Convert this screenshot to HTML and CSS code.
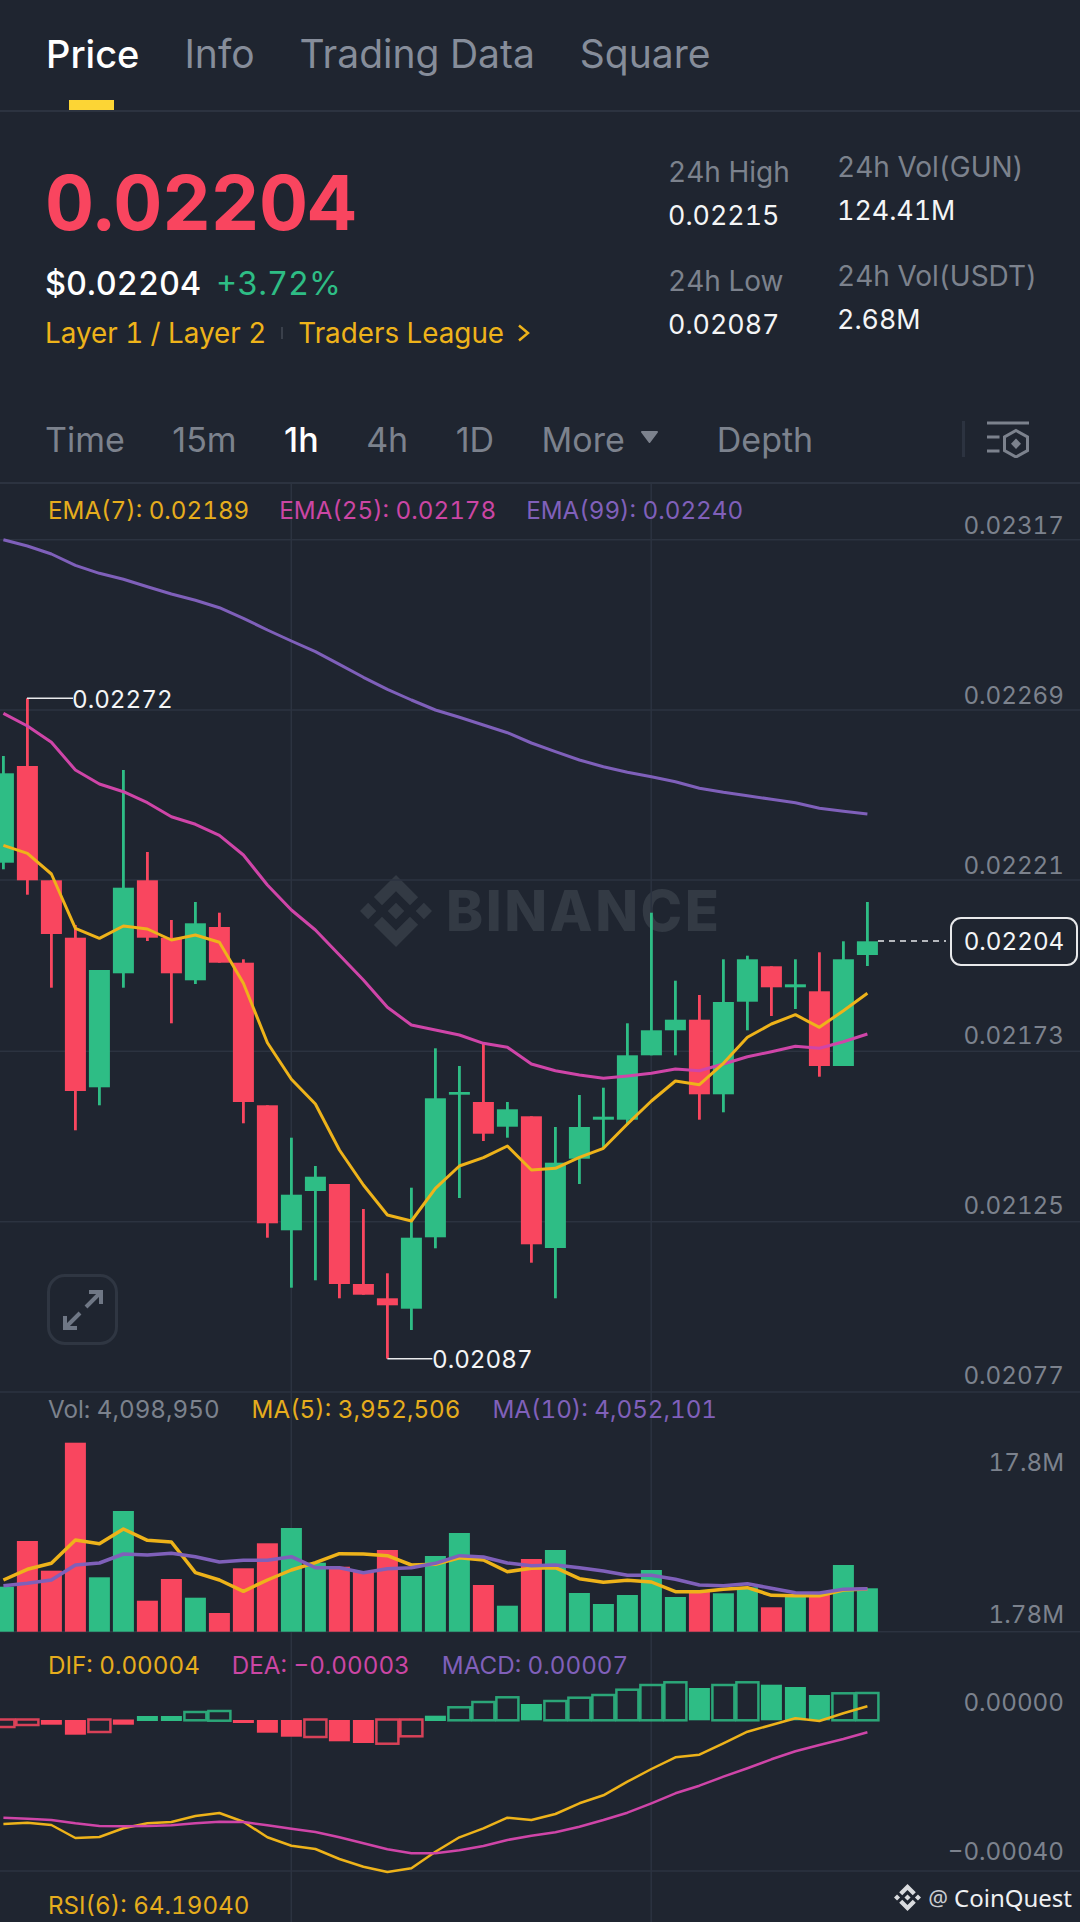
FILE: index.html
```html
<!DOCTYPE html>
<html lang="en">
<head>
    <meta charset="UTF-8">
    <meta name="viewport" content="width=device-width, initial-scale=1.0">
    <title>GUN/USDT Price</title>
    <link rel="stylesheet" href="styles.css">
</head>
<body>
    <div class="page">
        <nav class="tabs">
            <a class="tab active" href="#">Price</a>
            <a class="tab" href="#">Info</a>
            <a class="tab" href="#">Trading Data</a>
            <a class="tab" href="#">Square</a>
        </nav>

        <section class="summary">
            <div class="quote">
                <div class="last-price">0.02204</div>
                <div class="fiat-row">
                    <span class="fiat">$0.02204</span>
                    <span class="change">+3.72%</span>
                </div>
                <div class="tags">
                    <span>Layer 1 / Layer 2</span>
                    <i class="tag-sep"></i>
                    <span>Traders League</span>
                    <svg class="chevron" viewBox="0 0 13 18"><path d="M2 1.500 11 9 2 16.500" /></svg>
                </div>
            </div>
            <div class="stats">
                <div class="stat-col">
                    <div class="stat"><span class="stat-label">24h High</span><span class="stat-value">0.02215</span></div>
                    <div class="stat"><span class="stat-label">24h Low</span><span class="stat-value">0.02087</span></div>
                </div>
                <div class="stat-col stat-col-vol">
                    <div class="stat"><span class="stat-label">24h Vol(GUN)</span><span class="stat-value">124.41M</span></div>
                    <div class="stat"><span class="stat-label">24h Vol(USDT)</span><span class="stat-value">2.68M</span></div>
                </div>
            </div>
        </section>

        <div class="toolbar">
            <span class="interval">Time</span>
            <span class="interval">15m</span>
            <span class="interval active">1h</span>
            <span class="interval">4h</span>
            <span class="interval">1D</span>
            <span class="interval more">More
                <svg class="caret" viewBox="0 0 19 12"><path d="M2 1h15L9.500 11z" /></svg>
            </span>
            <span class="interval depth">Depth</span>
            <i class="toolbar-sep"></i>
            <svg class="settings" viewBox="0 0 44 38">
                <path class="settings-line" d="M1 3h42M1 17h12.500M1 31h12.500" />
                <path class="settings-line" d="M30 10.500 41.500 17v13.500L30 37l-11.500-6.500V17z" />
                <path class="settings-dot" d="M30 18.500 35 23.700 30 29 25 23.700z" />
            </svg>
        </div>

        <div class="chart">
            <div class="watermark">
                <svg class="watermark-logo" viewBox="0 0 126.610 126.610"><path d="m38.730 53.200 24.590-24.580 24.600 24.600 14.300-14.310L63.320 0 24.420 38.900zM0 63.31l14.300-14.310 14.310 14.310-14.310 14.300zM38.730 73.41 63.32 98l24.600-24.600 14.310 14.290-38.900 38.910-38.910-38.880zM98 63.31l14.300-14.310 14.310 14.300-14.310 14.310zM77.830 63.300 63.320 48.780 52.590 59.510l-1.240 1.230-2.540 2.540 14.510 14.500 14.510-14.470z" /></svg>
                <span>BINANCE</span>
            </div>

            <svg id="plot" class="plot" viewBox="0 484 1080 1438"></svg>

            <div class="pane pane-main">
                <div class="legend">
                    <span class="c-yellow">EMA(7): 0.02189</span>
                    <span class="c-pink">EMA(25): 0.02178</span>
                    <span class="c-purple">EMA(99): 0.02240</span>
                </div>
                <div class="y-axis">
                    <span>0.02317</span>
                    <span>0.02269</span>
                    <span>0.02221</span>
                    <span>0.02173</span>
                    <span>0.02125</span>
                    <span>0.02077</span>
                </div>
                <span class="mark mark-high">0.02272</span>
                <span class="mark mark-low">0.02087</span>
                <span class="price-tag">0.02204</span>
                <button class="expand">
                    <svg viewBox="0 0 42 42"><path d="M24 18 39 3M27 3h12v12M18 24 3 39M3 27v12h12" /></svg>
                </button>
            </div>

            <div class="pane pane-vol">
                <div class="legend">
                    <span class="c-gray">Vol: 4,098,950</span>
                    <span class="c-yellow">MA(5): 3,952,506</span>
                    <span class="c-purple">MA(10): 4,052,101</span>
                </div>
                <div class="y-axis">
                    <span>17.8M</span>
                    <span>1.78M</span>
                </div>
            </div>

            <div class="pane pane-macd">
                <div class="legend">
                    <span class="c-yellow">DIF: 0.00004</span>
                    <span class="c-pink">DEA: −0.00003</span>
                    <span class="c-purple">MACD: 0.00007</span>
                </div>
                <div class="y-axis">
                    <span>0.00000</span>
                    <span>−0.00040</span>
                </div>
            </div>

            <div class="pane pane-rsi">
                <div class="legend">
                    <span class="c-yellow">RSI(6): 64.19040</span>
                </div>
                <div class="credit">
                    <svg class="credit-logo" viewBox="0 0 126.610 126.610"><path d="m38.730 53.200 24.590-24.580 24.600 24.600 14.300-14.310L63.320 0 24.420 38.900zM0 63.31l14.300-14.310 14.310 14.310-14.310 14.300zM38.730 73.41 63.32 98l24.600-24.600 14.310 14.290-38.900 38.910-38.910-38.880zM98 63.31l14.300-14.310 14.310 14.300-14.310 14.310zM77.830 63.300 63.320 48.780 52.590 59.510l-1.240 1.230-2.540 2.540 14.510 14.500 14.510-14.470z" /></svg>
                    <span class="credit-at">@</span>
                    <span>CoinQuest</span>
                </div>
            </div>
        </div>
    </div>

    <script src="chart.js"></script>
</body>
</html>
```

FILE: styles.css
```css
* {
    box-sizing: border-box;
}

body {
    margin: 0;
    background: #1f2530;
    font-family: 'Inter', sans-serif;
    font-variant-numeric: tabular-nums;
    color: #fff;
}

.page {
    width: 1080px;
    height: 1922px;
    overflow: hidden;
}

/* tabs */
.tabs {
    display: flex;
    gap: 45px;
    height: 112px;
    padding: 29px 0 0 46px;
    border-bottom: 2px solid #2c3340;
}

.tab {
    position: relative;
    height: 81px;
    font-size: 39px;
    line-height: 50px;
    color: #868d9a;
    text-decoration: none;
}

.tab.active {
    font-size: 38px;
    color: #fff;
    font-weight: 500;
}

.tab.active::after {
    content: "";
    position: absolute;
    left: 23px;
    bottom: 0;
    width: 45px;
    height: 10px;
    background: #fcd535;
}

/* price summary */
.summary {
    display: flex;
    justify-content: space-between;
    height: 268px;
    padding: 37px 0 0 45px;
}

.last-price {
    margin-top: 5px;
    font-size: 76px;
    line-height: 96px;
    font-weight: 700;
    letter-spacing: -0.600px;
    color: #f9455f;
}

.fiat-row {
    display: flex;
    gap: 15px;
    margin-top: 14px;
    font-size: 32.500px;
    line-height: 40px;
}

.fiat {
    font-weight: 500;
}

.change {
    color: #2ebd85;
}

.tags {
    display: flex;
    align-items: center;
    margin-top: 9px;
    font-size: 27.800px;
    line-height: 40px;
    color: #eeb31a;
}

.tag-sep {
    width: 2px;
    height: 12px;
    margin: 0 15px;
    background: #3a404b;
}

.chevron {
    width: 13px;
    height: 18px;
    margin-left: 13px;
    fill: none;
    stroke: #eeb31a;
    stroke-width: 2.500;
}

.stats {
    display: flex;
    width: 412px;
}

.stat-col {
    display: flex;
    flex-direction: column;
    gap: 30px;
    width: 169px;
    padding-top: 5px;
}

.stat-col-vol {
    width: auto;
    padding-top: 0;
}

.stat {
    display: flex;
    flex-direction: column;
    gap: 7px;
}

.stat-label {
    font-size: 28px;
    line-height: 36px;
    color: #7c828d;
}

.stat-value {
    font-size: 26.800px;
    line-height: 36px;
    color: #f4f5f6;
}

/* interval bar */
.toolbar {
    display: flex;
    align-items: center;
    height: 104px;
    padding: 16px 50px 0 45px;
    border-bottom: 2px solid #2c3340;
    font-size: 34px;
    font-variant-numeric: normal;
    color: #7c828d;
}

.interval {
    margin-right: 47.500px;
}

.interval.active {
    color: #fff;
    font-weight: 500;
}

.more {
    display: flex;
    align-items: center;
    gap: 15px;
    margin-right: 58px;
}

.caret {
    width: 19px;
    height: 12px;
    margin-top: -4px;
    fill: #7c828d;
    stroke: #7c828d;
    stroke-width: 2;
    stroke-linejoin: round;
}

.depth {
    margin-right: auto;
}

.toolbar-sep {
    width: 3px;
    height: 36px;
    margin-right: 21px;
    background: #2c3340;
}

.settings {
    width: 44px;
    height: 38px;
}

.settings-line {
    fill: none;
    stroke: #7c828d;
    stroke-width: 3;
}

.settings-dot {
    fill: #7c828d;
}

/* chart */
.chart {
    position: relative;
    height: 1438px;
}

.plot {
    position: absolute;
    top: 0;
    left: 0;
    width: 1080px;
    height: 1438px;
}

.watermark {
    position: absolute;
    top: 391px;
    left: 360px;
    display: flex;
    align-items: center;
    gap: 14px;
    font-size: 56px;
    line-height: 72px;
    font-weight: 800;
    letter-spacing: 2.500px;
    color: #333a44;
}

.watermark-logo {
    width: 72px;
    height: 72px;
    fill: #333a44;
}

.pane {
    position: relative;
}

.pane-main {
    height: 908px;
}

.pane-vol {
    height: 240px;
}

.pane-macd {
    height: 240px;
}

.pane-rsi {
    height: 50px;
}

.legend {
    display: flex;
    gap: 30px;
    padding-left: 48px;
    font-size: 24.200px;
    line-height: 30px;
}

.pane-main .legend {
    padding-top: 12px;
}

.pane-vol .legend {
    gap: 32px;
    padding-top: 3px;
}

.pane-macd .legend {
    gap: 32px;
    padding-top: 19px;
}

.pane-rsi .legend {
    padding-top: 19px;
}

.c-yellow {
    color: #e6ad1d;
}

.c-pink {
    color: #cb46a4;
}

.c-purple {
    color: #8060ba;
}

.c-gray {
    color: #7c828d;
}

.y-axis {
    position: absolute;
    right: 16px;
    display: flex;
    flex-direction: column;
    justify-content: space-between;
    align-items: flex-end;
    font-size: 24.200px;
    line-height: 30px;
    color: #7c828d;
}

.pane-main .y-axis {
    top: 27px;
    bottom: 1px;
}

.pane-vol .y-axis {
    top: 56px;
    bottom: 2px;
}

.pane-macd .y-axis {
    top: 56px;
    bottom: 5px;
}

.mark {
    position: absolute;
    font-size: 24.200px;
    line-height: 30px;
    color: #f4f5f6;
}

.mark-high {
    top: 201px;
    left: 72px;
}

.mark-low {
    top: 861px;
    left: 432px;
}

.price-tag {
    position: absolute;
    top: 433px;
    left: 950px;
    width: 128px;
    height: 49px;
    border: 2px solid #e8e9eb;
    border-radius: 11px;
    font-size: 24.200px;
    line-height: 45px;
    text-align: center;
    color: #f4f5f6;
}

.expand {
    position: absolute;
    top: 790px;
    left: 47px;
    display: flex;
    align-items: center;
    justify-content: center;
    width: 71px;
    height: 71px;
    padding: 0;
    background: none;
    border: 3px solid #2f3642;
    border-radius: 18px;
}

.expand svg {
    width: 42px;
    height: 42px;
    fill: none;
    stroke: #6f7785;
    stroke-width: 4;
}

.credit {
    position: absolute;
    right: 8px;
    top: 0;
    height: 50px;
    display: flex;
    align-items: center;
    gap: 6px;
    font-family: 'Noto Sans', sans-serif;
    font-size: 24px;
    color: #eef0f2;
}

.credit-logo {
    width: 27px;
    height: 27px;
    margin-right: 1px;
    fill: #d9dbde;
}

.credit-at {
    font-size: 22px;
    color: #c9ccd0;
}
```

FILE: chart.js
```js
const GREEN = '#2ebd85';
const RED = '#f9465f';
const YELLOW = '#eeb31a';
const PINK = '#cf45a8';
const PURPLE = '#7f60ba';
const GRID = '#2c3340';

const SLOT = 24;
const START_X = 3.4;

function xAt(i) {
    return START_X + SLOT * i;
}

// color, wick top, body top, body bottom, wick bottom
const candles = [
    ['g', 756, 773.3, 862.7, 869.3],
    ['r', 698.3, 766, 880.3, 894.7],
    ['r', 880.3, 880.3, 934, 987.7],
    ['r', 925, 937.7, 1091, 1130.3],
    ['g', 970, 970, 1087.3, 1105.3],
    ['g', 770, 887.7, 973.3, 987.7],
    ['r', 852, 880.3, 937.7, 941],
    ['r', 920, 937.7, 973.3, 1023.3],
    ['g', 902, 923.3, 980.3, 984],
    ['r', 912.7, 927, 962.7, 962.7],
    ['r', 959.3, 962.7, 1102, 1123.3],
    ['r', 1105.3, 1105.3, 1223.3, 1237.7],
    ['g', 1137.7, 1194.7, 1230.3, 1287.7],
    ['g', 1166, 1176.7, 1191, 1280.3],
    ['r', 1184, 1184, 1284, 1298.3],
    ['r', 1209, 1284, 1294.7, 1294.7],
    ['r', 1273.3, 1298.3, 1305.3, 1358.7],
    ['g', 1187.7, 1237.7, 1308.7, 1330],
    ['g', 1048.3, 1098.3, 1237.3, 1248.3],
    ['g', 1066, 1092, 1094.7, 1198],
    ['r', 1042.3, 1102, 1133.7, 1141],
    ['g', 1102, 1109.3, 1126.7, 1137.7],
    ['r', 1116.3, 1116.3, 1244.3, 1262.7],
    ['g', 1127, 1162.7, 1248, 1298.3],
    ['g', 1095, 1127, 1158.7, 1184],
    ['g', 1087.7, 1116.7, 1119.7, 1148],
    ['g', 1023.3, 1055.3, 1119.7, 1125],
    ['g', 912.7, 1030.3, 1055.3, 1055.3],
    ['g', 980.7, 1019.7, 1030.3, 1055.3],
    ['r', 995, 1019.7, 1094.3, 1119.7],
    ['g', 959.3, 1002, 1094.3, 1112.3],
    ['g', 955.7, 959.3, 1001.7, 1030.3],
    ['r', 966.3, 966.3, 987.3, 1016],
    ['g', 959.3, 984.3, 987.3, 1009],
    ['r', 952.3, 991.3, 1066, 1076.7],
    ['g', 941.3, 959.3, 1066, 1066],
    ['g', 902, 941.3, 955, 966]
];

const ema99 = [539.7, 546, 554, 565.3, 573.3, 579.3, 586.7, 594, 600.3, 607.7, 618.3, 630, 641, 651.7, 664.3, 677.3, 689.3, 700, 710, 717.3, 725, 732.7, 743, 751.7, 760, 766.7, 772.3, 776.7, 781.7, 788.3, 792.3, 795.7, 799.3, 802.7, 808.3, 811.3, 814];
const ema25 = [713.3, 726, 742.3, 770, 784, 791.7, 802.7, 816.7, 824.3, 835.3, 855, 885, 910, 930, 955, 980, 1007.3, 1025, 1030, 1035, 1043.3, 1047.3, 1064, 1070.7, 1075, 1078.3, 1076, 1073.3, 1069, 1070.7, 1064, 1056.7, 1051.7, 1046.3, 1048.3, 1041.7, 1034];
const ema7 = [845.3, 853.3, 874, 928.3, 938.3, 926, 929, 940, 935, 942.3, 983.3, 1042.7, 1079.3, 1104, 1150, 1185, 1215, 1221, 1188.3, 1166, 1157.7, 1146, 1170, 1168.3, 1157.3, 1148.3, 1124, 1101, 1081, 1084.7, 1063.3, 1037.3, 1024, 1014.7, 1027.3, 1010.7, 993.3];

const VOL_BASE = 1631.7;
const volTops = [1586.7, 1541, 1570.7, 1442.7, 1577.3, 1511, 1600.7, 1579, 1597.7, 1613, 1568.3, 1543.3, 1528, 1562.7, 1566.7, 1571.7, 1550, 1576, 1556, 1533, 1585, 1605.7, 1559, 1550, 1593, 1604, 1595, 1570, 1597, 1591.7, 1593.3, 1587.3, 1607.3, 1595.7, 1595, 1565, 1588.3];
const volMa5 = [1580, 1569.3, 1563.3, 1540, 1543.7, 1529, 1540.3, 1542, 1572.7, 1580, 1591.3, 1580, 1570, 1562.7, 1553.7, 1554, 1555.7, 1565, 1564.3, 1557.7, 1560, 1571.7, 1568.3, 1567.7, 1578.7, 1582.3, 1580.3, 1582, 1591.7, 1591.7, 1589.3, 1587.7, 1595.3, 1595.7, 1595.7, 1590, 1589];
const volMa10 = [1585.7, 1583.3, 1580, 1565, 1563, 1554, 1555, 1553.3, 1556.7, 1562, 1560.3, 1560.3, 1556.7, 1567.7, 1567.7, 1572.7, 1568.7, 1567.7, 1563.3, 1555.7, 1557, 1563, 1565.7, 1565, 1567.7, 1571, 1575.3, 1575.3, 1579.3, 1585, 1585.7, 1583.7, 1588.3, 1592.7, 1593, 1589.3, 1588.7];

// top, bottom, filled (1) or hollow (0)
const macd = [
    [1719.5, 1727, 0], [1719.5, 1725, 0], [1720, 1724.7, 1], [1720, 1734.7, 1], [1719.5, 1732, 0],
    [1719.5, 1724.7, 1], [1716, 1721, 1], [1716, 1721, 1], [1712, 1720.3, 0], [1711, 1720.7, 0],
    [1720, 1723, 1], [1720, 1732.7, 1], [1720, 1736.7, 1], [1719.5, 1737, 0], [1720, 1741.3, 1],
    [1720, 1743, 1], [1719.5, 1743.7, 0], [1719.5, 1736.3, 0], [1715.7, 1721, 1], [1707.3, 1720.3, 0],
    [1702, 1720.3, 0], [1697.3, 1720.3, 0], [1704, 1720.3, 1], [1701, 1720.3, 0], [1697.7, 1720.3, 0],
    [1695, 1720.3, 0], [1689.7, 1720.3, 0], [1685, 1720.3, 0], [1682.3, 1720.3, 0], [1688, 1720.3, 1],
    [1685, 1720.3, 0], [1682.3, 1720.3, 0], [1684.7, 1720.3, 1], [1687, 1720.3, 1], [1695, 1720.3, 1],
    [1693.3, 1720.3, 0], [1693, 1720.3, 0]
];
const dif = [1824, 1822.7, 1825, 1838, 1837, 1828.3, 1823.3, 1822, 1816, 1813, 1821.7, 1837.3, 1845.7, 1849, 1859, 1866.7, 1872, 1868.3, 1851.7, 1837.3, 1828.3, 1817.7, 1820, 1814, 1803.3, 1795.3, 1781.7, 1769, 1757.3, 1754.7, 1743.3, 1731.7, 1725, 1718.3, 1721, 1713.3, 1706.3];
const dea = [1817.7, 1818.7, 1820, 1823.3, 1826, 1826.3, 1826, 1825.3, 1823.3, 1821.7, 1822, 1825.3, 1828.7, 1832, 1837.3, 1843.3, 1849.3, 1853.3, 1853.3, 1850.3, 1846, 1840, 1835.7, 1832.3, 1826.7, 1820, 1812.7, 1803.3, 1793.3, 1785.7, 1776.7, 1768.3, 1759.3, 1751.3, 1745, 1739, 1732.3];

const plot = document.getElementById('plot');

function add(tag, attrs) {
    const el = document.createElementNS('http://www.w3.org/2000/svg', tag);
    for (const key in attrs) {
        el.setAttribute(key, attrs[key]);
    }
    plot.appendChild(el);
    return el;
}

function rect(x, y, w, h, fill) {
    add('rect', { x: x, y: y, width: w, height: h, fill: fill });
}

function line(values, color, width) {
    const points = values.map((y, i) => xAt(i) + ',' + y).join(' ');
    add('polyline', { points: points, fill: 'none', stroke: color, 'stroke-width': width, 'stroke-linejoin': 'round' });
}

// grid
[539.7, 710, 880, 1051.3, 1221.7, 1392, 1631.7, 1871].forEach(y => rect(0, y - 0.75, 1080, 1.5, GRID));
[291.3, 651.2].forEach(x => rect(x - 0.75, 484, 1.5, 1438, GRID));

// candles
candles.forEach((c, i) => {
    const color = c[0] === 'g' ? GREEN : RED;
    const x = xAt(i);
    rect(x - 1.4, c[1], 2.8, c[4] - c[1], color);
    rect(x - 10.5, c[2], 21, c[3] - c[2], color);
});

line(ema99, PURPLE, 3);
line(ema25, PINK, 3);
line(ema7, YELLOW, 3);

// high and low markers
rect(27, 697.5, 46, 1.5, '#e8e9eb');
rect(387.4, 1358, 45, 1.5, '#e8e9eb');

// last price dashes
add('line', { x1: 878, x2: 946, y1: 941, y2: 941, stroke: '#e8e9eb', 'stroke-width': 1.5, 'stroke-dasharray': '6 5' });

// volume
volTops.forEach((top, i) => {
    rect(xAt(i) - 10.5, top, 21, VOL_BASE - top, candles[i][0] === 'g' ? GREEN : RED);
});
line(volMa5, YELLOW, 3.5);
line(volMa10, PURPLE, 3.5);

// macd histogram
macd.forEach((m, i) => {
    const color = i > 17 || (i > 5 && i < 10) ? GREEN : RED;
    const x = xAt(i);
    if (m[2]) {
        rect(x - 10.5, m[0], 21, m[1] - m[0], color);
    } else {
        add('rect', { x: x - 11, y: m[0], width: 22, height: m[1] - m[0], fill: 'none', stroke: color, 'stroke-width': 2.5, opacity: 0.85 });
    }
});
line(dif, YELLOW, 2.5);
line(dea, PINK, 2.5);
```
